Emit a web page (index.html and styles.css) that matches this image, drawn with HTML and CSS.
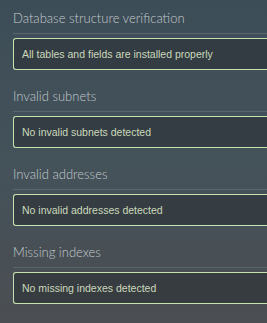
FILE: index.html
```html
<!DOCTYPE html>
<html lang="en">
<head>
  <meta charset="UTF-8">
  <meta name="viewport" content="width=device-width, initial-scale=1.0">
  <title>Database check</title>
  <link rel="stylesheet" href="styles.css">
</head>
<body>

  <div class="checks">
    <div class="check">
      <h4>Database structure verification</h4>
      <div class="result">All tables and fields are installed properly</div>
    </div>

    <div class="check">
      <h4>Invalid subnets</h4>
      <div class="result">No invalid subnets detected</div>
    </div>

    <div class="check">
      <h4>Invalid addresses</h4>
      <div class="result">No invalid addresses detected</div>
    </div>

    <div class="check">
      <h4>Missing indexes</h4>
      <div class="result">No missing indexes detected</div>
    </div>
  </div>

</body>
</html>
```

FILE: styles.css
```css
html {
  height: 100%;
}

body {
  margin: 0;
  padding: 0;
  min-height: 100%;
  overflow: hidden;
  background: linear-gradient(to bottom, #3d4d57 0%, #44525a 50%, #4b4e52 100%);
  font-family: "Liberation Sans", Arial, sans-serif;
}

.checks {
  padding: 8px 0 0 13px;
}

.check {
  margin-bottom: 16px;
}

.check h4 {
  margin: 0;
  padding-bottom: 5px;
  font-family: Lato, sans-serif;
  font-weight: 300;
  font-size: 13px;
  line-height: 20px;
  color: #c3cacd;
  border-bottom: 1px solid #58666e;
}

/* the result box runs on past the right edge of the panel */
.result {
  margin-top: 4px;
  height: 30px;
  line-height: 30px;
  padding-left: 8px;
  border: 1px solid #c6e2b0;
  border-right: none;
  border-radius: 3px 0 0 3px;
  background-color: rgba(40, 46, 50, 0.55);
  color: #cbd9bd;
  font-size: 10.5px;
}
```
